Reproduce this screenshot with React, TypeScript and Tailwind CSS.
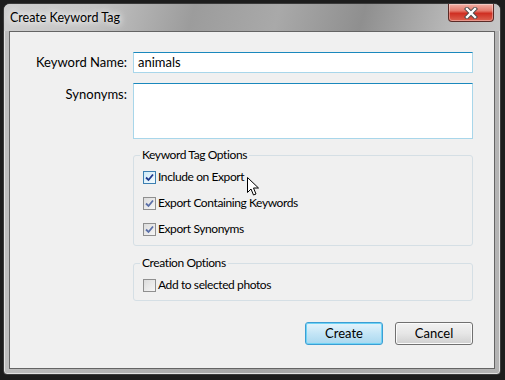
import React from "react";

const font = { fontFamily: 'Lato, "Open Sans", sans-serif' };

function Check({ checked, hot }: { checked?: boolean; hot?: boolean }) {
	return (
		<span
			className={
				"flex h-[13px] w-[13px] shrink-0 items-center justify-center border " +
				(hot
					? "border-[#3c7fb1] bg-gradient-to-br from-[#cfeaf7] to-[#f4fbfe]"
					: "border-[#8f8f8f] bg-gradient-to-br from-[#dcdcdc] to-[#f6f6f6]")
			}
		>
			{checked && (
				<svg width="9" height="9" viewBox="0 0 9 9">
					<path
						d="M1 4.5 L3.5 7 L8 1.5"
						fill="none"
						stroke={hot ? "#1f3a8f" : "#5a6fa8"}
						strokeWidth="1.8"
					/>
				</svg>
			)}
		</span>
	);
}

function CheckRow({
	label,
	checked,
	hot,
}: {
	label: string;
	checked?: boolean;
	hot?: boolean;
}) {
	return (
		<label className="flex h-[26px] items-center gap-[2px] pl-[9px]">
			<Check checked={checked} hot={hot} />
			<span className="text-[12px] tracking-[-0.4px] text-black">{label}</span>
		</label>
	);
}

function Button({ children, def }: { children: React.ReactNode; def?: boolean }) {
	return (
		<button
			className={
				"h-[23px] w-[78px] rounded-[3px] border text-[13px] text-black " +
				(def
					? "border-[#3c9ed4] bg-gradient-to-b from-[#e5f4fc] via-[#c4e5f6] to-[#a9d8ef] shadow-[inset_0_0_0_1px_#6fd3f5]"
					: "border-[#707070] bg-gradient-to-b from-[#f2f2f2] via-[#e6e6e6] to-[#d0d0d0] shadow-[inset_0_0_0_1px_#fbfbfb]")
			}
		>
			{children}
		</button>
	);
}

export default function App() {
	return (
		<div
			className="relative h-[380px] w-[505px] overflow-hidden bg-[#1d1d1d] pl-[3px] pt-[3px]"
			style={font}
		>
			{/* window frame */}
			<div className="flex h-[372px] w-[498px] flex-col rounded-t-[7px] rounded-b-[4px] border border-[#3a3a3a] bg-gradient-to-r from-[#bdbdbd] via-[#a6a6a6] to-[#b4b4b4] shadow-[inset_0_0_0_1px_#e2e2e2]">
				{/* title bar */}
				<div className="flex h-[27px] items-start rounded-t-[6px] bg-[linear-gradient(105deg,#cfcfcf_0%,#c4c4c4_18%,#9c9c9c_38%,#a9a9a9_55%,#8f8f8f_72%,#b9b9b9_90%,#c6c6c6_100%)]">
					<span className="ml-[6px] mt-[6px] text-[12.5px] leading-[16px] text-black [text-shadow:0_0_6px_#fff,0_0_10px_#fff]">
						Create Keyword Tag
					</span>
					<div className="ml-auto mr-[6px] flex h-[18px] w-[46px] items-center justify-center rounded-b-[4px] border border-t-0 border-[#5a2a26] bg-[linear-gradient(180deg,#f2b0a6_0%,#e57a6c_40%,#cf2f22_55%,#dd6250_100%)] shadow-[inset_0_0_0_1px_rgba(255,255,255,0.35)]">
						<svg width="14" height="12" viewBox="0 0 14 12">
							<path
								d="M3 2 L11 10 M11 2 L3 10"
								stroke="#4a4a4a"
								strokeWidth="4.2"
								strokeLinecap="square"
							/>
							<path
								d="M3 2 L11 10 M11 2 L3 10"
								stroke="#ffffff"
								strokeWidth="2.4"
								strokeLinecap="square"
							/>
						</svg>
					</div>
				</div>

				{/* client area */}
				<div className="mx-[5px] mb-[5px] flex-1 border border-[#646464] bg-[#f0f0f0] pt-[20px] text-[12px] text-black">
					<div className="grid grid-cols-[117px_340px] gap-x-[6px] gap-y-[10px] text-[13px]">
						<div className="flex h-[21px] items-center justify-end">Keyword Name:</div>
						<div className="flex h-[21px] items-center border border-[#a8d6ea] border-t-[#1a88bd] bg-white px-[4px]">
							animals
						</div>
						<div className="pt-[2px] text-right">Synonyms:</div>
						<div className="h-[56px] border border-[#a8d6ea] border-t-[#1a88bd] bg-white" />
					</div>

					<div className="ml-[123px] w-[340px]">
						<fieldset className="mt-[8px] rounded-[3px] border border-[#d5dfe5] pb-[3px]">
							<legend className="ml-[6px] px-[2px] leading-[16px] tracking-[-0.4px]">Keyword Tag Options</legend>
							<div className="pt-[1px]">
								<CheckRow label="Include on Export" checked hot />
								<CheckRow label="Export Containing Keywords" checked />
								<CheckRow label="Export Synonyms" checked />
							</div>
						</fieldset>

						<fieldset className="mt-[9px] rounded-[3px] border border-[#d5dfe5] pb-[2px]">
							<legend className="ml-[6px] px-[2px] leading-[16px] tracking-[-0.4px]">Creation Options</legend>
							<div className="pt-[1px]">
								<CheckRow label="Add to selected photos" />
							</div>
						</fieldset>

						<div className="mt-[21px] flex justify-end gap-[12px]">
							<Button def>Create</Button>
							<Button>Cancel</Button>
						</div>
					</div>
				</div>
			</div>

			{/* mouse pointer */}
			<svg
				className="absolute left-[247px] top-[177px]"
				width="13"
				height="20"
				viewBox="0 0 13 20"
			>
				<path
					d="M0.5 0.5 L0.5 15.5 L4 12 L6.5 18 L9 17 L6.5 11 L11.5 11 Z"
					fill="#ffffff"
					stroke="#000000"
					strokeWidth="1"
					strokeLinejoin="round"
				/>
			</svg>
		</div>
	);
}
